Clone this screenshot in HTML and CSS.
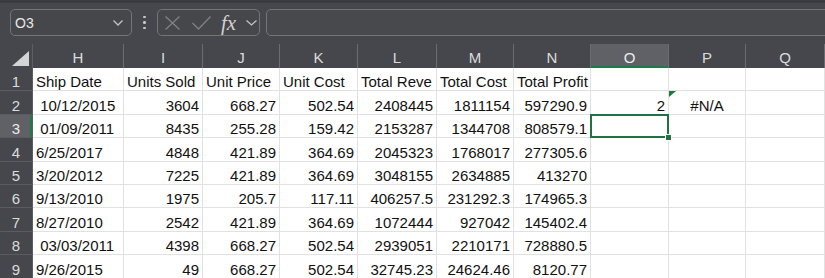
FILE: index.html
```html
<!DOCTYPE html>
<html>
<head>
<meta charset="utf-8">
<link rel="stylesheet" href="styles.css">
</head>
<body>
<div class="fbar">
  <div class="namebox">
    <span>O3</span>
    <svg class="chev" width="10" height="6" viewBox="0 0 10 6"><path d="M0.5 0.5 L5 5 L9.5 0.5" fill="none" stroke="#c4c4c4" stroke-width="1.3"/></svg>
  </div>
  <div class="dots"><i></i><i></i><i></i></div>
  <div class="fxgroup">
    <svg class="ix" width="15" height="14" viewBox="0 0 15 14"><path d="M0.5 0.5 L14.5 13.5 M14.5 0.5 L0.5 13.5" stroke="#7f8186" stroke-width="1.3" fill="none"/></svg>
    <svg class="ick" width="19" height="14" viewBox="0 0 19 14"><path d="M0.5 7 L6.5 13 L18.5 0.5" stroke="#7f8186" stroke-width="1.3" fill="none"/></svg>
    <span class="fx">fx</span>
    <svg class="chev2" width="11" height="6" viewBox="0 0 11 6"><path d="M0.5 0.5 L5.5 5 L10.5 0.5" fill="none" stroke="#c4c4c4" stroke-width="1.3"/></svg>
  </div>
  <div class="finput"></div>
</div>
<div class="sheet">
  <div class="corner"><svg width="17" height="15" viewBox="0 0 17 15"><path d="M17 0 L17 15 L0 15 Z" fill="#d4d4d4"/></svg></div>
  <div class="ch">H</div><div class="ch">I</div><div class="ch">J</div><div class="ch">K</div><div class="ch">L</div><div class="ch">M</div><div class="ch">N</div><div class="ch sel">O</div><div class="ch">P</div><div class="ch">Q</div>

  <div class="rh">1</div><div class="d">Ship Date</div><div class="d">Units Sold</div><div class="d">Unit Price</div><div class="d">Unit Cost</div><div class="d">Total Reve</div><div class="d">Total Cost</div><div class="d">Total Profit</div><div class="d"></div><div class="d"></div><div class="d"></div>

  <div class="rh">2</div><div class="d"> 10/12/2015</div><div class="d n">3604</div><div class="d n">668.27</div><div class="d n">502.54</div><div class="d n">2408445</div><div class="d n">1811154</div><div class="d n">597290.9</div><div class="d n">2</div><div class="d e err">#N/A</div><div class="d"></div>

  <div class="rh sel">3</div><div class="d"> 01/09/2011</div><div class="d n">8435</div><div class="d n">255.28</div><div class="d n">159.42</div><div class="d n">2153287</div><div class="d n">1344708</div><div class="d n">808579.1</div><div class="d active"></div><div class="d"></div><div class="d"></div>

  <div class="rh">4</div><div class="d">6/25/2017</div><div class="d n">4848</div><div class="d n">421.89</div><div class="d n">364.69</div><div class="d n">2045323</div><div class="d n">1768017</div><div class="d n">277305.6</div><div class="d"></div><div class="d"></div><div class="d"></div>

  <div class="rh">5</div><div class="d">3/20/2012</div><div class="d n">7225</div><div class="d n">421.89</div><div class="d n">364.69</div><div class="d n">3048155</div><div class="d n">2634885</div><div class="d n">413270</div><div class="d"></div><div class="d"></div><div class="d"></div>

  <div class="rh">6</div><div class="d">9/13/2010</div><div class="d n">1975</div><div class="d n">205.7</div><div class="d n">117.11</div><div class="d n">406257.5</div><div class="d n">231292.3</div><div class="d n">174965.3</div><div class="d"></div><div class="d"></div><div class="d"></div>

  <div class="rh">7</div><div class="d">8/27/2010</div><div class="d n">2542</div><div class="d n">421.89</div><div class="d n">364.69</div><div class="d n">1072444</div><div class="d n">927042</div><div class="d n">145402.4</div><div class="d"></div><div class="d"></div><div class="d"></div>

  <div class="rh">8</div><div class="d"> 03/03/2011</div><div class="d n">4398</div><div class="d n">668.27</div><div class="d n">502.54</div><div class="d n">2939051</div><div class="d n">2210171</div><div class="d n">728880.5</div><div class="d"></div><div class="d"></div><div class="d"></div>

  <div class="rh">9</div><div class="d">9/26/2015</div><div class="d n">49</div><div class="d n">668.27</div><div class="d n">502.54</div><div class="d n">32745.23</div><div class="d n">24624.46</div><div class="d n">8120.77</div><div class="d"></div><div class="d"></div><div class="d"></div>
</div>
</body>
</html>
```

FILE: styles.css
```css
html, body {
  margin: 0;
  padding: 0;
  background: #ffffff;
  overflow: hidden;
  font-family: "Liberation Sans", Arial, sans-serif;
}

.fbar {
  height: 44px;
  box-sizing: border-box;
  background: #45474c;
  border-top: 3px solid #393b40;
  padding: 6px 0 0 10px;
  display: flex;
  align-items: flex-start;
  overflow: hidden;
}

.namebox {
  width: 122px;
  height: 27px;
  box-sizing: border-box;
  border: 1px solid #73757a;
  border-radius: 5px;
  background: #46474b;
  display: flex;
  align-items: center;
  justify-content: space-between;
  padding: 0 8px 0 4px;
  color: #e8e8e8;
  font-size: 14px;
  flex: none;
}

.namebox span {
  padding-top: 1px;
}

.dots {
  width: 25px;
  height: 27px;
  flex: none;
  display: flex;
  flex-direction: column;
  align-items: center;
  justify-content: center;
  gap: 3px;
}

.dots i {
  display: block;
  width: 2.5px;
  height: 2.5px;
  border-radius: 50%;
  background: #c8c8c8;
}

.fxgroup {
  width: 103px;
  height: 27px;
  box-sizing: border-box;
  border: 1px solid #73757a;
  border-radius: 5px;
  background: #46474b;
  display: flex;
  align-items: center;
  flex: none;
}

.fxgroup .ix {
  margin-left: 7px;
  flex: none;
}

.fxgroup .ick {
  margin-left: 12px;
  flex: none;
}

.fxgroup .fx {
  margin-left: 10px;
  width: 19px;
  font-family: "Liberation Serif", "Times New Roman", serif;
  font-style: italic;
  font-size: 21px;
  color: #d2d2d2;
  line-height: 20px;
  letter-spacing: 0;
  flex: none;
}

.fxgroup .chev2 {
  margin-left: 6px;
  flex: none;
}

.finput {
  flex: 1;
  margin-left: 6px;
  margin-right: -10px;
  height: 27px;
  box-sizing: border-box;
  border: 1px solid #73757a;
  border-radius: 5px;
  background: #48494c;
}

.sheet {
  display: grid;
  grid-template-columns: 33px 91px 79px 77px 78px 79px 77px 77px 78px 77px 79px;
  grid-template-rows: 24px 23px 24px 23px 24px 23px 23px 24px 23px 24px;
  width: 825px;
}

.sheet > div {
  box-sizing: border-box;
}

.corner {
  background: #45474c;
  display: flex;
  justify-content: flex-end;
  align-items: flex-end;
  padding: 0 3px 2px 0;
  border-right: 1px solid #5c5e63;
}

.ch {
  background: #45474c;
  color: #dcdcdc;
  font-size: 15px;
  text-align: center;
  line-height: 20px;
  padding-top: 4px;
  border-right: 1px solid #6a6c71;
}

.ch.sel {
  background: #5f6166;
  color: #ececec;
  box-shadow: inset 0 -2px 0 #1f7a45;
}

.rh {
  background: #45474c;
  color: #dcdcdc;
  font-size: 15px;
  line-height: 16px;
  display: flex;
  align-items: flex-end;
  justify-content: center;
  padding-bottom: 0.5px;
  border-bottom: 1px solid #5a5c61;
  border-right: 1px solid #5a5c61;
}

.rh.sel {
  background: #5f6166;
  color: #ececec;
  box-shadow: inset -2px 0 0 #1f7a45;
}

.d {
  border-right: 1px solid #e1e1e1;
  border-bottom: 1px solid #e1e1e1;
  font-size: 15px;
  color: #111111;
  line-height: 16px;
  display: flex;
  align-items: flex-end;
  justify-content: flex-start;
  padding: 0 3px 0.5px 3px;
  white-space: pre;
  overflow: hidden;
}

.d.n {
  justify-content: flex-end;
}

.d.e {
  justify-content: center;
}

.d.err {
  position: relative;
}

.d.err::before {
  content: "";
  position: absolute;
  left: 0;
  top: 0;
  width: 0;
  height: 0;
  border-top: 6px solid #1e7b3a;
  border-right: 7px solid transparent;
}

.d.active {
  position: relative;
  overflow: visible;
  z-index: 2;
}

.d.active::after {
  content: "";
  position: absolute;
  left: -1px;
  top: -1px;
  right: -1px;
  bottom: -1px;
  border: 2px solid #1f7244;
}

.d.active::before {
  content: "";
  position: absolute;
  right: -4px;
  bottom: -4px;
  width: 5px;
  height: 5px;
  background: #1f7244;
  border: 1px solid #ffffff;
  z-index: 3;
}
```
